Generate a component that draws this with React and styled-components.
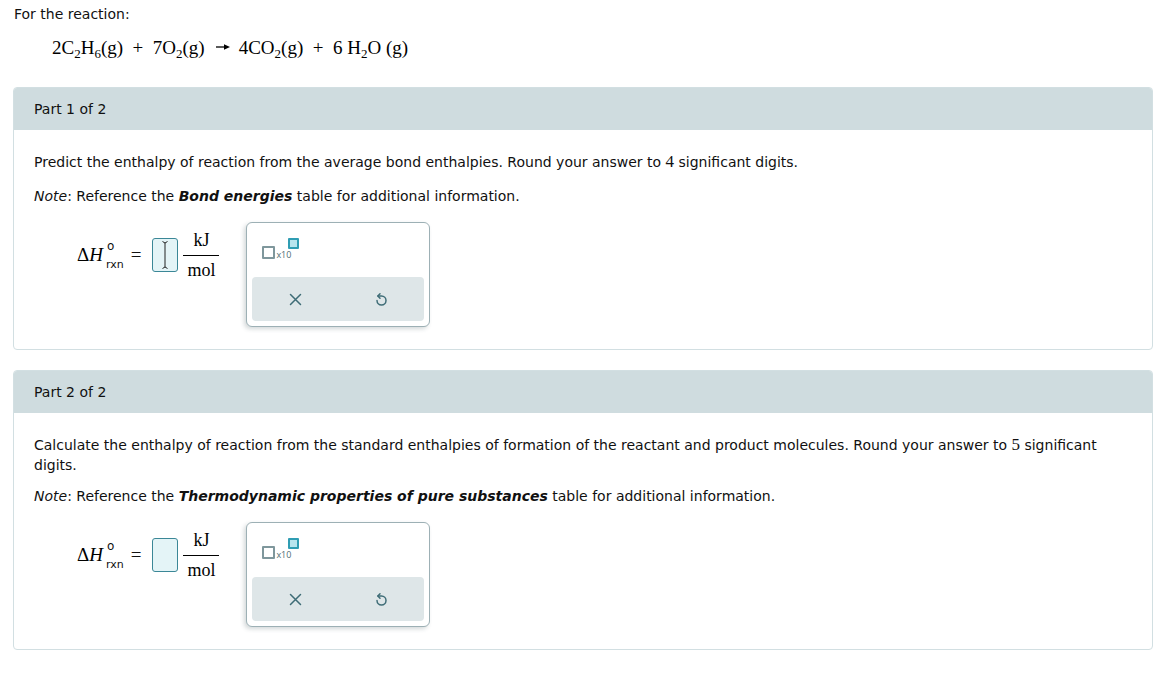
import React from 'react';
import styled, { createGlobalStyle } from 'styled-components';

const GlobalStyle = createGlobalStyle`
  html, body {
    margin: 0;
    padding: 0;
    background: #fff;
  }
  body {
    font-family: Verdana, "DejaVu Sans", sans-serif;
    color: #111;
  }
`;

const Page = styled.div`
  width: 1157px;
  padding: 5px 0 20px 13px;
  box-sizing: border-box;
`;

const Intro = styled.div`
  font-size: 14px;
  line-height: 18px;
  padding-left: 1px;
`;

const Equation = styled.div`
  font-family: "Liberation Serif", "Times New Roman", serif;
  font-size: 19px;
  line-height: 24px;
  margin: 13px 0 0 39px;
  white-space: pre;
  color: #000;
`;

const Sub = styled.sub`
  font-size: 13px;
  vertical-align: -4px;
  line-height: 0;
`;

const Arrow = styled.span`
  display: inline-block;
  width: 14px;
  margin: 0 9px 0 11px;
  vertical-align: 4px;
  svg { display: block; }
`;

const Card = styled.section`
  width: 1140px;
  box-sizing: border-box;
  border: 1px solid #d2dfe2;
  border-radius: 4px;
  margin-top: ${p => p.$top}px;
  overflow: hidden;
`;

const CardHeader = styled.div`
  height: 42px;
  background: #cfdcdf;
  display: flex;
  align-items: center;
  padding-left: 20px;
  font-size: 14px;
`;

const CardBody = styled.div`
  padding: 22px 20px 22px 20px;
`;

const Para = styled.p`
  margin: 0 0 ${p => p.$gap}px;
  font-size: 14px;
  line-height: 20px;
`;

const Num = styled.span`
  font-family: "Liberation Serif", "Times New Roman", serif;
  font-size: 17px;
  line-height: 20px;
`;

const AnswerRow = styled.div`
  display: flex;
  align-items: flex-start;
  margin-top: 16px;
  padding-left: 43px;
`;

const MathBlock = styled.div`
  display: flex;
  align-items: center;
  margin-top: 5px;
  height: 55px;
`;

const Delta = styled.span`
  font-family: "Liberation Serif", "Times New Roman", serif;
  font-size: 19px;
  color: #000;
`;

const Italic = styled.i`
  font-family: "Liberation Serif", "Times New Roman", serif;
  font-size: 19px;
  color: #000;
`;

const Scripts = styled.span`
  display: flex;
  flex-direction: column;
  font-family: Verdana, "DejaVu Sans", sans-serif;
  margin-left: 3px;
  position: relative;
  top: 1px;
`;

const Sup = styled.span`
  font-size: 12px;
  line-height: 12px;
  margin-left: 1px;
`;

const Rxn = styled.span`
  font-size: 11px;
  line-height: 12px;
  margin-top: 7px;
`;

const Equals = styled.span`
  font-family: "Liberation Serif", "Times New Roman", serif;
  font-size: 19px;
  margin: 0 11px 0 7px;
`;

const InputBox = styled.div`
  width: 26px;
  height: 34px;
  box-sizing: border-box;
  border: 1.5px solid #3b8797;
  border-radius: 3px;
  background: #e4f4f7;
  display: flex;
  align-items: center;
  justify-content: center;
`;

const Fraction = styled.div`
  display: flex;
  flex-direction: column;
  align-items: center;
  margin-left: 5px;
  font-family: "Liberation Serif", "Times New Roman", serif;
  font-size: 18px;
  color: #000;
  width: 36px;
`;

const FracTop = styled.span`
  line-height: 22px;
  padding-bottom: 4px;
  border-bottom: 1px solid #000;
  width: 100%;
  text-align: center;
`;

const FracBottom = styled.span`
  line-height: 22px;
  padding-top: 3px;
`;

const Palette = styled.div`
  width: 184px;
  height: 105px;
  box-sizing: border-box;
  margin-left: 27px;
  border: 1px solid #9db0b5;
  border-radius: 6px;
  box-shadow: -2px 2px 4px rgba(60, 80, 85, 0.22);
  padding: 0 5px 5px;
  display: flex;
  flex-direction: column;
  background: #fff;
`;

const PaletteTop = styled.div`
  flex: 1;
  display: flex;
  align-items: flex-start;
  padding: 15px 0 0 10px;
`;

const Sci = styled.div`
  display: flex;
  align-items: flex-end;
  height: 21px;
`;

const Square = styled.span`
  display: block;
  width: ${p => p.$size}px;
  height: ${p => p.$size}px;
  box-sizing: border-box;
  border: 2px solid ${p => p.$color};
  background: ${p => p.$fill};
  border-radius: 1px;
`;

const Times = styled.span`
  font-family: "Open Sans", "DejaVu Sans", sans-serif;
  font-size: 9px;
  color: #4f6e75;
  line-height: 1;
  margin-left: 1px;
`;

const Exp = styled.span`
  align-self: flex-start;
  margin-left: -3px;
`;

const ButtonBar = styled.div`
  height: 44px;
  background: #dee6e8;
  border-radius: 4px;
  display: flex;
  align-items: center;
`;

const IconButton = styled.button`
  flex: 1;
  height: 100%;
  border: none;
  background: transparent;
  padding: 0;
  display: flex;
  align-items: center;
  justify-content: center;
  color: #3e6c76;
  svg { display: block; }
`;

const XIcon = () => (
  <svg width="13" height="13" viewBox="0 0 13 13">
    <path d="M1.5 1.5 L11.5 11.5 M11.5 1.5 L1.5 11.5" stroke="currentColor" strokeWidth="1.5" strokeLinecap="round" />
  </svg>
);

const UndoIcon = () => (
  <svg width="14" height="15" viewBox="0 0 14 15" fill="none">
    <path d="M4 4 H7.5 A4.5 4.5 0 1 1 3 8.5" stroke="currentColor" strokeWidth="1.5" strokeLinecap="round" />
    <path d="M6 1.8 L3.8 4 L6 6.2" stroke="currentColor" strokeWidth="1.5" strokeLinecap="round" strokeLinejoin="round" />
  </svg>
);

const Cursor = () => (
  <svg width="8" height="30" viewBox="0 0 8 30">
    <path d="M1.5 1.5 L4 3 L6.5 1.5 M4 3 V27 M1.5 28.5 L4 27 L6.5 28.5" stroke="#222" strokeWidth="1" fill="none" />
  </svg>
);

const Answer = ({ cursor }) => (
  <AnswerRow>
    <MathBlock>
      <Delta>Δ</Delta>
      <Italic>H</Italic>
      <Scripts>
        <Sup>o</Sup>
        <Rxn>rxn</Rxn>
      </Scripts>
      <Equals>=</Equals>
      <InputBox>{cursor && <Cursor />}</InputBox>
      <Fraction>
        <FracTop>kJ</FracTop>
        <FracBottom>mol</FracBottom>
      </Fraction>
    </MathBlock>
    <Palette>
      <PaletteTop>
        <Sci>
          <Square $size={13} $color="#7f979c" $fill="#fff" />
          <Times>x10</Times>
          <Exp>
            <Square $size={11} $color="#2f9db3" $fill="#b7e5ee" />
          </Exp>
        </Sci>
      </PaletteTop>
      <ButtonBar>
        <IconButton aria-label="clear"><XIcon /></IconButton>
        <IconButton aria-label="undo"><UndoIcon /></IconButton>
      </ButtonBar>
    </Palette>
  </AnswerRow>
);

const RArrow = () => (
  <svg width="14" height="6" viewBox="0 0 14 6">
    <path d="M0 3 H9" stroke="#000" strokeWidth="1.3" />
    <path d="M8 0.2 L14 3 L8 5.8 Z" fill="#000" />
  </svg>
);

const App = () => (
  <>
    <GlobalStyle />
    <Page>
      <Intro>For the reaction:</Intro>
      <Equation>
        2C<Sub>2</Sub>H<Sub>6</Sub>(g)  +  7O<Sub>2</Sub>(g)<Arrow><RArrow /></Arrow>4CO<Sub>2</Sub>(g)  +  6 H<Sub>2</Sub>O (g)
      </Equation>

      <Card $top={27}>
        <CardHeader>Part 1 of 2</CardHeader>
        <CardBody>
          <Para $gap={14}>
            Predict the enthalpy of reaction from the average bond enthalpies. Round your answer to <Num>4</Num> significant digits.
          </Para>
          <Para $gap={0}>
            <i>Note</i>: Reference the <b><i>Bond energies</i></b> table for additional information.
          </Para>
          <Answer cursor />
        </CardBody>
      </Card>

      <Card $top={20}>
        <CardHeader>Part 2 of 2</CardHeader>
        <CardBody>
          <Para $gap={11}>
            Calculate the enthalpy of reaction from the standard enthalpies of formation of the reactant and product molecules. Round your answer to <Num>5</Num> significant digits.
          </Para>
          <Para $gap={0}>
            <i>Note</i>: Reference the <b><i>Thermodynamic properties of pure substances</i></b> table for additional information.
          </Para>
          <Answer />
        </CardBody>
      </Card>
    </Page>
  </>
);

export default App;
